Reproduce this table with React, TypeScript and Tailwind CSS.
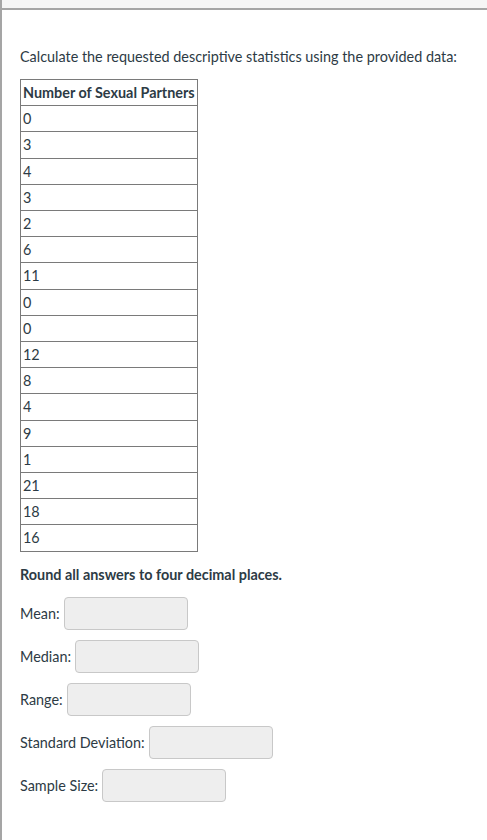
const values = ["0", "3", "4", "3", "2", "6", "11", "0", "0", "12", "8", "4", "9", "1", "21", "18", "16"];

const fields = [
  { label: "Mean:" },
  { label: "Median:" },
  { label: "Range:" },
  { label: "Standard Deviation:" },
  { label: "Sample Size:" },
];

export default function App() {
  return (
    <div
      className="min-h-[840px] w-[487px] bg-white text-[14.4px] text-[#2d3b45]"
      style={{ fontFamily: 'Lato, "Open Sans", sans-serif' }}
    >
      <div className="h-[10px] border-b-2 border-l-2 border-[#a5a5a5] bg-[#f5f5f5]" />
      <div className="min-h-[830px] border-l-2 border-[#a5a5a5] pl-[18px] pt-[36px]">
        <p className="leading-[21px]">Calculate the requested descriptive statistics using the provided data:</p>

        <table className="mt-[12px] border-collapse border border-[#7a7a7a]">
          <thead>
            <tr>
              <th className="border border-[#7a7a7a] px-[2px] py-[2px] text-left font-bold leading-[21.2px]">
                Number of Sexual Partners
              </th>
            </tr>
          </thead>
          <tbody>
            {values.map((v, i) => (
              <tr key={i}>
                <td className="border border-[#7a7a7a] px-[2px] py-[2px] leading-[21.2px]">{v}</td>
              </tr>
            ))}
          </tbody>
        </table>

        <p className="mt-[12px] font-bold leading-[21px]">Round all answers to four decimal places.</p>

        <div className="mt-[12px] flex flex-col gap-[10px]">
          {fields.map((f) => (
            <div key={f.label} className="flex items-center gap-[4px]">
              <span className="leading-[21px]">{f.label}</span>
              <div className="h-[33px] w-[124px] rounded-[4px] border border-[#c8c8c8] bg-[#eeeeee]" />
            </div>
          ))}
        </div>
      </div>
    </div>
  );
}
